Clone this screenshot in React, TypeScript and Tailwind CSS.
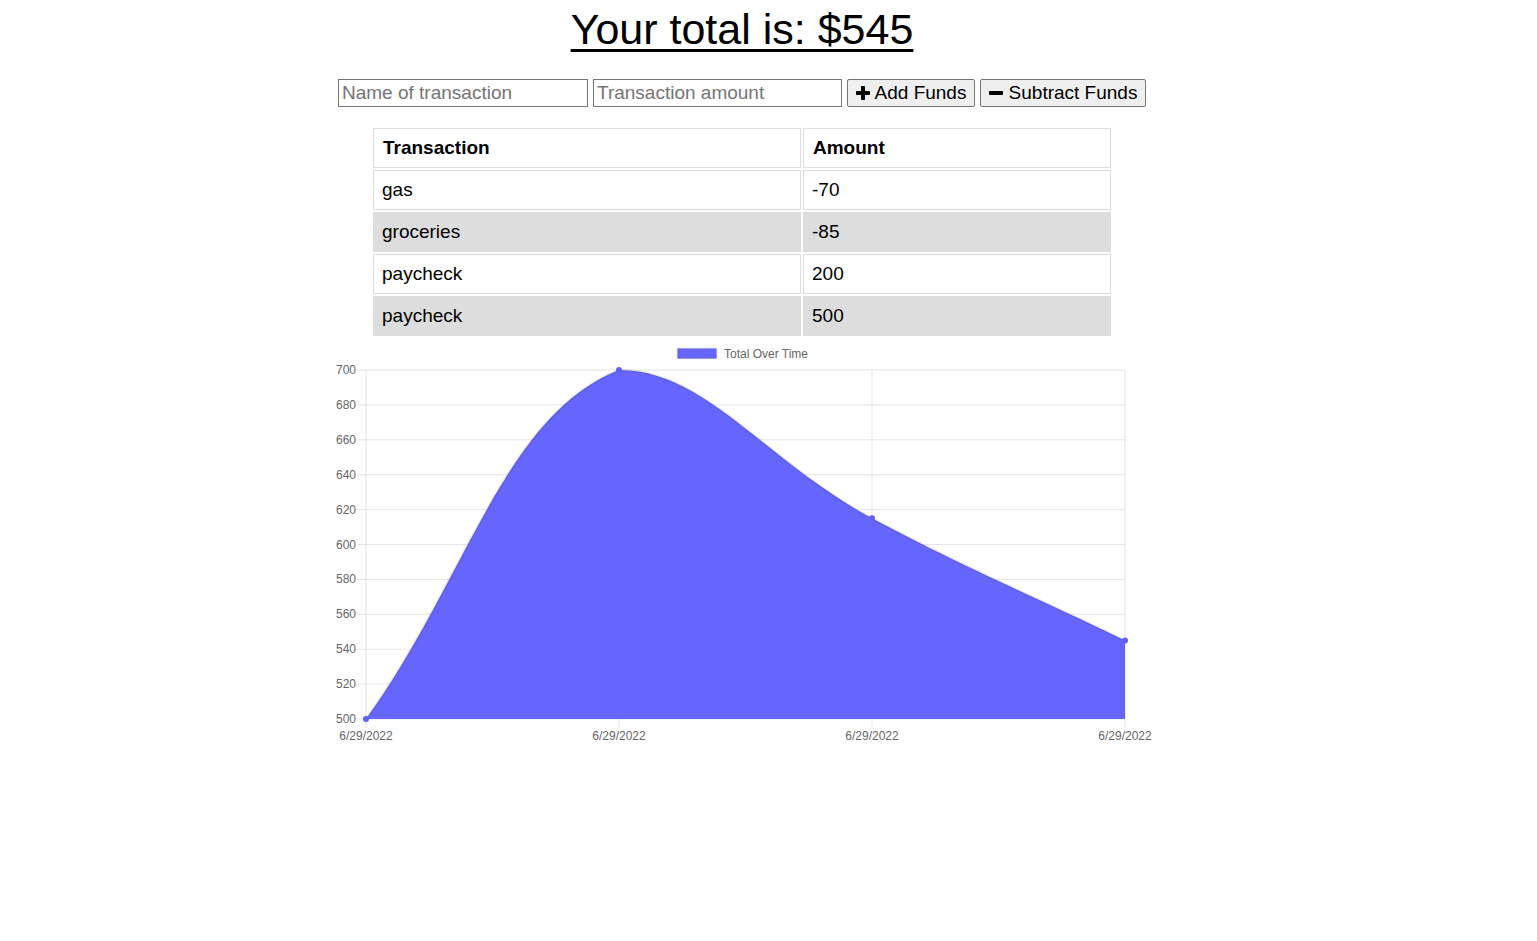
import React from "react";

const rows = [
  { name: "gas", amount: "-70" },
  { name: "groceries", amount: "-85" },
  { name: "paycheck", amount: "200" },
  { name: "paycheck", amount: "500" },
];

const yFor = (v: number) => 719 - ((v - 500) * 349) / 200;
const xs = [366, 619, 872, 1125];
const vals = [500, 700, 615, 545];

function PlusIcon() {
  return (
    <svg width={14} height={14} viewBox="0 0 14 14" className="block">
      <rect x={5} y={0} width={4} height={14} rx={0.8} fill="#000" />
      <rect x={0} y={5} width={14} height={4} rx={0.8} fill="#000" />
    </svg>
  );
}

function MinusIcon() {
  return (
    <svg width={14} height={14} viewBox="0 0 14 14" className="block">
      <rect x={0} y={5} width={14} height={4} rx={0.8} fill="#000" />
    </svg>
  );
}

function Chart() {
  const ticks = [500, 520, 540, 560, 580, 600, 620, 640, 660, 680, 700];
  const curve =
    "M366,719 C467.2,579.4 503.3,415.9 619,370 C705.7,370 763.8,460.1 872,518.3 C966.2,568.6 1023.8,591.5 1125,640.5";
  return (
    <svg width={830} height={410} viewBox="327 340 830 410" className="block">
      <rect x={677.5} y={348.5} width={39} height={10} fill="#6666ff" stroke="rgba(0,0,0,0.1)" strokeWidth={1.5} />
      <text x={724} y={357.5} fontSize={12} fill="#666" fontFamily="'Liberation Sans', Arial, sans-serif">
        Total Over Time
      </text>
      {ticks.map((t) => (
        <g key={t}>
          <line x1={357} x2={1125} y1={yFor(t)} y2={yFor(t)} stroke="rgba(0,0,0,0.1)" strokeWidth={1} />
          <text
            x={356}
            y={yFor(t) + 4}
            fontSize={12}
            fill="#666"
            textAnchor="end"
            fontFamily="'Liberation Sans', Arial, sans-serif"
          >
            {t}
          </text>
        </g>
      ))}
      {xs.map((x) => (
        <g key={x}>
          <line x1={x} x2={x} y1={370} y2={728} stroke="rgba(0,0,0,0.1)" strokeWidth={1} />
          <text
            x={x}
            y={740}
            fontSize={12}
            fill="#666"
            textAnchor="middle"
            fontFamily="'Liberation Sans', Arial, sans-serif"
          >
            6/29/2022
          </text>
        </g>
      ))}
      <path d={curve + " L1125,719 L366,719 Z"} fill="#6666ff" />
      <path d={curve} fill="none" stroke="rgba(0,0,0,0.1)" strokeWidth={2.5} />
      {xs.map((x, i) => (
        <circle key={x} cx={x} cy={yFor(vals[i])} r={3} fill="#6060f5" />
      ))}
    </svg>
  );
}

export default function App() {
  return (
    <div
      className="w-[1484px] flex flex-col items-center bg-white text-black"
      style={{ fontFamily: "'Liberation Sans', Arial, sans-serif" }}
    >
      <h1 className="text-[43px] leading-[50px] pt-[4px] underline underline-offset-[5px] decoration-[3px] font-normal">
        Your total is: $545
      </h1>
      <div className="mt-[25px] flex items-center gap-[5px]">
        <input
          placeholder="Name of transaction"
          className="w-[250px] h-[28px] border border-[#767676] px-[3px] text-[19px] placeholder:text-[#757575] outline-none"
        />
        <input
          placeholder="Transaction amount"
          className="w-[249px] h-[28px] border border-[#767676] px-[3px] text-[19px] placeholder:text-[#757575] outline-none"
        />
        <button className="h-[28px] w-[128px] flex items-center justify-center gap-[5px] border border-[#767676] rounded-[2px] bg-[#efefef] text-[19px]">
          <PlusIcon />
          <span>Add Funds</span>
        </button>
        <button className="h-[28px] w-[166px] flex items-center justify-center gap-[6px] border border-[#767676] rounded-[2px] bg-[#efefef] text-[19px]">
          <MinusIcon />
          <span>Subtract Funds</span>
        </button>
      </div>
      <table className="mt-[19px] w-[742px] border-separate border-spacing-[2px] text-[19px] leading-[22px]">
        <thead>
          <tr>
            <th className="w-[428px] text-left font-bold border border-[#dddddd] bg-white py-2 px-[9px]">Transaction</th>
            <th className="w-[308px] text-left font-bold border border-[#dddddd] bg-white py-2 px-[9px]">Amount</th>
          </tr>
        </thead>
        <tbody>
          {rows.map((r, i) => (
            <tr key={i} className={i % 2 === 1 ? "bg-[#dddddd]" : "bg-white"}>
              <td className="border border-[#dddddd] py-2 px-[8px]">{r.name}</td>
              <td className="border border-[#dddddd] py-2 px-[8px]">{r.amount}</td>
            </tr>
          ))}
        </tbody>
      </table>
      <div className="mt-[2px] mb-[190px]">
        <Chart />
      </div>
    </div>
  );
}
